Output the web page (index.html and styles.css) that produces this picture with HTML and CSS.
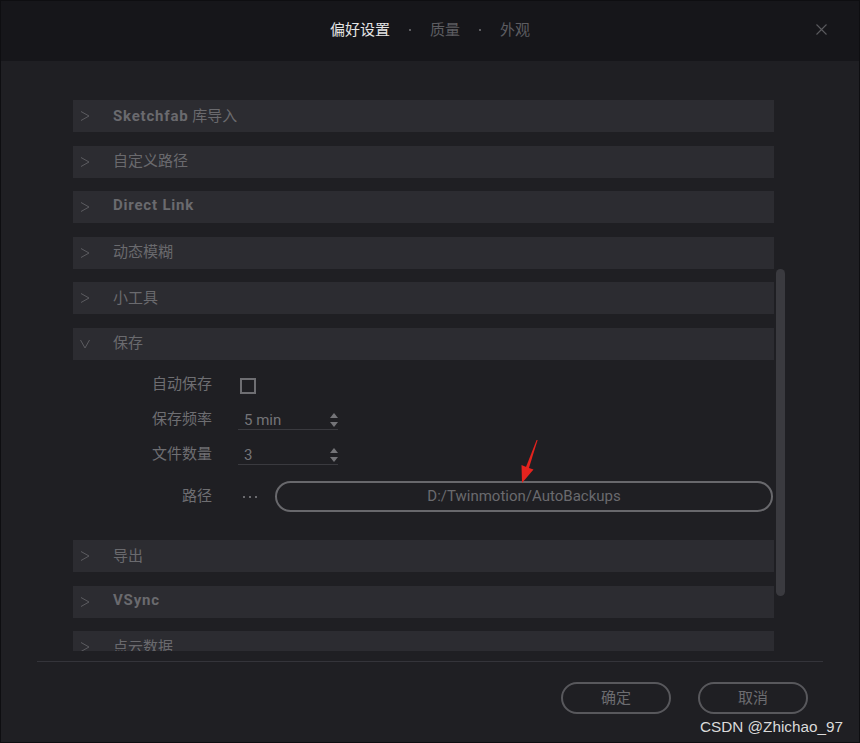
FILE: index.html
```html
<!DOCTYPE html>
<html lang="zh-CN">
<head>
    <meta charset="UTF-8">
    <title>偏好设置</title>
    <link rel="stylesheet" href="styles.css">
</head>
<body>
<div class="window">

    <div class="header">
        <div class="tabs">
            <span class="tab active">偏好设置</span>
            <span class="sep"></span>
            <span class="tab">质量</span>
            <span class="sep"></span>
            <span class="tab">外观</span>
        </div>
        <svg class="close" width="11" height="11" viewBox="0 0 11 11">
            <path d="M0.5 0.5 L10.5 10.5 M10.5 0.5 L0.5 10.5" stroke="#5a5a5e" stroke-width="1.1" fill="none"/>
        </svg>
    </div>

    <div class="scroll">
        <!-- Sketchfab -->
        <div class="section">
            <div class="section-head">
                <svg class="chev" width="10" height="10" viewBox="0 0 10 10"><polyline points="1,0.5 9,5 1,9.5" /></svg>
                <span><b class="en">Sketchfab</b> 库导入</span>
            </div>
        </div>
        <div class="section">
            <div class="section-head">
                <svg class="chev" width="10" height="10" viewBox="0 0 10 10"><polyline points="1,0.5 9,5 1,9.5" /></svg>
                <span>自定义路径</span>
            </div>
        </div>
        <div class="section">
            <div class="section-head">
                <svg class="chev" width="10" height="10" viewBox="0 0 10 10"><polyline points="1,0.5 9,5 1,9.5" /></svg>
                <b class="en">Direct Link</b>
            </div>
        </div>
        <div class="section">
            <div class="section-head">
                <svg class="chev" width="10" height="10" viewBox="0 0 10 10"><polyline points="1,0.5 9,5 1,9.5" /></svg>
                <span>动态模糊</span>
            </div>
        </div>
        <div class="section">
            <div class="section-head">
                <svg class="chev" width="10" height="10" viewBox="0 0 10 10"><polyline points="1,0.5 9,5 1,9.5" /></svg>
                <span>小工具</span>
            </div>
        </div>

        <!-- open section -->
        <div class="section">
            <div class="section-head">
                <svg class="chev" width="10" height="10" viewBox="0 0 10 10"><polyline points="0.5,1 5,9 9.5,1" /></svg>
                <span>保存</span>
            </div>
            <div class="section-body">
                <div class="field">
                    <span class="field-label">自动保存</span>
                    <span class="checkbox"></span>
                </div>
                <div class="field">
                    <span class="field-label">保存频率</span>
                    <div class="spin">
                        <span>5 min</span>
                        <span class="arrows"><i class="up"></i><i class="down"></i></span>
                    </div>
                </div>
                <div class="field">
                    <span class="field-label">文件数量</span>
                    <div class="spin">
                        <span>3</span>
                        <span class="arrows"><i class="up"></i><i class="down"></i></span>
                    </div>
                </div>
                <div class="field field-path">
                    <span class="field-label">路径</span>
                    <div class="path-row">
                        <span class="dots"><i></i><i></i><i></i></span>
                        <div class="path-box">D:/Twinmotion/AutoBackups</div>
                    </div>
                </div>
            </div>
        </div>

        <div class="section">
            <div class="section-head">
                <svg class="chev" width="10" height="10" viewBox="0 0 10 10"><polyline points="1,0.5 9,5 1,9.5" /></svg>
                <span>导出</span>
            </div>
        </div>
        <div class="section">
            <div class="section-head">
                <svg class="chev" width="10" height="10" viewBox="0 0 10 10"><polyline points="1,0.5 9,5 1,9.5" /></svg>
                <b class="en">VSync</b>
            </div>
        </div>
        <div class="section">
            <div class="section-head">
                <svg class="chev" width="10" height="10" viewBox="0 0 10 10"><polyline points="1,0.5 9,5 1,9.5" /></svg>
                <span>点云数据</span>
            </div>
        </div>

        <div class="scrollbar"></div>
    </div>

    <div class="footer">
        <div class="separator"></div>
        <div class="actions">
            <button class="btn">确定</button>
            <button class="btn">取消</button>
        </div>
    </div>

    <!-- annotation arrow -->
    <svg class="mark" width="50" height="55" viewBox="0 0 50 55">
        <polygon points="37.6,5 36.6,5 25.6,33 28.8,33.5" fill="#e4231e"/>
        <polygon points="22,48 33.5,34.5 27.5,32.5 21.5,30" fill="#e4231e"/>
    </svg>

    <div class="watermark">CSDN @Zhichao_97</div>
</div>
</body>
</html>
```

FILE: styles.css
```css
* {
    box-sizing: border-box;
}
body {
    margin: 0;
    background-color: #1f1f23;
    font-family: Roboto, "Noto Sans CJK SC", sans-serif;
}
.window {
    position: relative;
    width: 860px;
    height: 743px;
    border: 1px solid #0e0e11;
    background-color: #1f1f23;
    display: flex;
    flex-direction: column;
    overflow: hidden;
}
.header {
    flex: none;
    height: 60px;
    background-color: #16161a;
    display: grid;
    grid-template-columns: 1fr auto 1fr;
    align-items: center;
    padding-bottom: 5px;
}
.tabs {
    grid-column: 2;
    display: flex;
    align-items: center;
    font-size: 15px;
}
.tab {
    color: #5d5d61;
}
.tab.active {
    color: #e4e4e4;
}
.sep {
    width: 2px;
    height: 2px;
    margin: 3px 19px 0;
    background-color: #5d5d61;
}
.close {
    grid-column: 3;
    justify-self: end;
    margin-right: 32px;
    margin-top: 2px;
}
.scroll {
    flex: none;
    height: 590px;
    position: relative;
    overflow: hidden;
    padding: 39px 85px 0 72px;
}
.section {
    margin-bottom: 13.5px;
}
.section-head {
    height: 32px;
    background-color: #2c2c31;
    display: flex;
    align-items: center;
    padding: 0 0 4px 7px;
    color: #6a6a6e;
    font-size: 15px;
}
.section-head .en {
    font-weight: bold;
    letter-spacing: 0.8px;
}
.chev {
    flex: none;
    margin: 4px 23px 0 0;
}
.chev polyline {
    fill: none;
    stroke: #5c5c60;
    stroke-width: 1;
}
.section-body {
    padding: 8.5px 0 14.5px;
}
.field {
    display: grid;
    grid-template-columns: 139px 1fr;
    column-gap: 26px;
    align-items: center;
    height: 35px;
}
.field-label {
    text-align: right;
    color: #6e6e72;
    font-size: 15px;
    margin-bottom: 6px;
}
.checkbox {
    width: 16px;
    height: 16px;
    margin-left: 2px;
    border: 2px solid #6e6e72;
}
.spin {
    width: 100px;
    height: 19px;
    border-bottom: 1px solid #3a3a3f;
    display: flex;
    align-items: center;
    justify-content: space-between;
    padding-left: 6px;
    color: #747478;
    font-size: 15px;
}
.arrows {
    display: flex;
    flex-direction: column;
    gap: 4px;
}
.arrows i {
    width: 0;
    height: 0;
    border-left: 4.5px solid transparent;
    border-right: 4.5px solid transparent;
}
.arrows .up {
    border-bottom: 5px solid #747478;
}
.arrows .down {
    border-top: 5px solid #747478;
}
.field-path {
    height: 31px;
    margin-top: 8px;
}
.field-path .field-label {
    margin-bottom: 4px;
}
.path-row {
    display: flex;
    align-items: center;
}
.dots {
    display: flex;
    gap: 4px;
    margin-left: 5px;
}
.dots i {
    width: 2px;
    height: 2px;
    background-color: #6a6a6e;
}
.path-box {
    flex: 1;
    height: 31px;
    margin: 0 1px 0 18px;
    border: 2px solid #68686c;
    border-radius: 16px;
    text-align: center;
    line-height: 27px;
    color: #6a6a6e;
    font-size: 15px;
}
.scrollbar {
    position: absolute;
    left: 775px;
    top: 208px;
    width: 9px;
    height: 327px;
    border-radius: 5px;
    background-color: #3a3a3f;
}
.footer {
    flex: 1;
    display: flex;
    flex-direction: column;
    padding: 10px 36px 0;
}
.separator {
    height: 1px;
    background-color: #34343a;
}
.actions {
    display: flex;
    justify-content: flex-end;
    gap: 27px;
    margin-top: 20px;
    padding-right: 15px;
}
.btn {
    width: 110px;
    height: 32px;
    border: 2px solid #58585c;
    border-radius: 16px;
    background: none;
    color: #6c6c70;
    font-family: inherit;
    font-size: 15px;
    padding: 0 0 4px;
}
.mark {
    position: absolute;
    left: 499px;
    top: 434px;
}
.watermark {
    position: absolute;
    right: 16px;
    bottom: 6px;
    color: #dadada;
    font-family: "Liberation Sans", Arial, sans-serif;
    font-size: 15.3px;
}
```
